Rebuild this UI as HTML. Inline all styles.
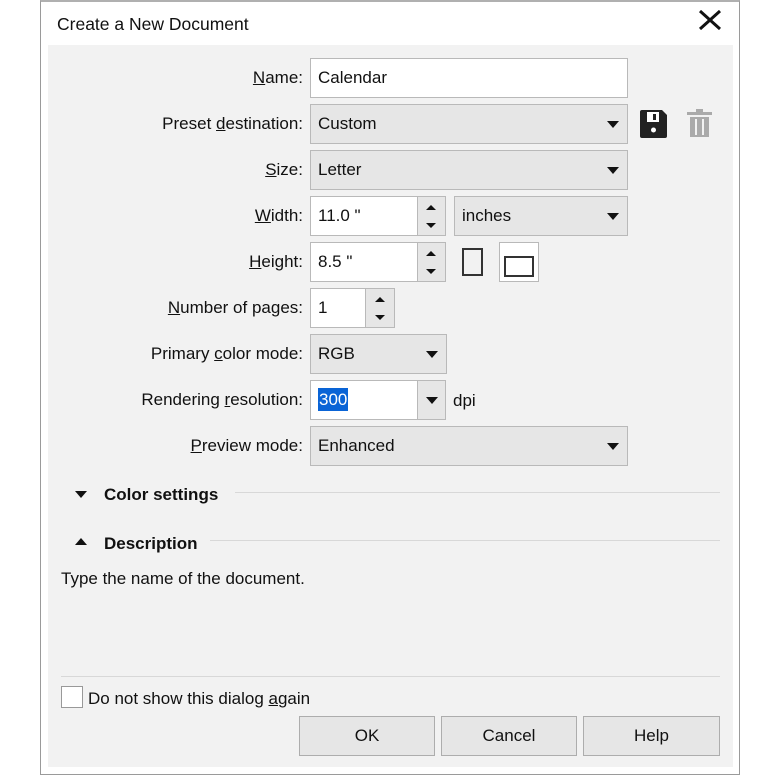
<!DOCTYPE html><html><head><style>
body{margin:0;width:780px;height:775px;background:#fff;position:relative;font-family:"Liberation Sans",sans-serif;font-size:17px;color:#111;overflow:hidden}
div{position:absolute;box-sizing:border-box}
.lab{right:477px;height:39px;line-height:40px;text-align:right;white-space:nowrap}
.in{background:#fff;border:1px solid #b9b9b9;padding-left:7px;line-height:38px}
.sel{background:#e6e6e6;border:1px solid #b9b9b9;padding-left:7px;line-height:38px}
.arr{width:0;height:0;border-left:6px solid transparent;border-right:6px solid transparent;border-top:7px solid #111}
.sp{background:#e6e6e6;border:1px solid #b9b9b9}
.up{width:0;height:0;border-left:5px solid transparent;border-right:5px solid transparent;border-bottom:5px solid #111}
.dn{width:0;height:0;border-left:5px solid transparent;border-right:5px solid transparent;border-top:5px solid #111}
.btn{background:#e6e6e6;border:1px solid #adadad;text-align:center;line-height:38px;top:716px;height:40px}
u{text-decoration:underline}
</style></head><body>
<div style="left:40px;top:0;width:700px;height:775px;border:1px solid #9a9a9a;border-top:2px solid #b0b0b0;background:#fff"></div>
<div style="left:48px;top:45px;width:685px;height:722px;background:#f2f2f2"></div>
<div style="left:57px;top:14px;font-size:17.5px">Create a New Document</div>
<svg style="position:absolute;left:698px;top:10px" width="24" height="20"><path d="M2 1L22 19M22 1L2 19" stroke="#111" stroke-width="3"/></svg>

<div class="lab" style="top:58px"><u>N</u>ame:</div>
<div class="in" style="left:310px;top:58px;width:318px;height:40px">Calendar</div>

<div class="lab" style="top:104px">Preset <u>d</u>estination:</div>
<div class="sel" style="left:310px;top:104px;width:318px;height:40px">Custom</div>
<div class="arr" style="left:607px;top:121px"></div>
<svg style="position:absolute;left:639px;top:110px" width="29" height="29"><path d="M3 0H23L28 5V26Q28 28 26 28H3Q1 28 1 26V2Q1 0 3 0Z" fill="#222"/><rect x="8" y="2" width="12" height="10" fill="#fff"/><rect x="14" y="4" width="3" height="6" fill="#222"/><circle cx="14.5" cy="20" r="2.5" fill="#fff"/></svg>
<svg style="position:absolute;left:686px;top:109px" width="27" height="29"><rect x="1" y="3" width="25" height="3" fill="#aaa"/><rect x="10" y="0" width="7" height="3" fill="#aaa"/><rect x="4" y="8" width="19" height="20" fill="#aaa"/><rect x="9" y="10" width="2" height="16" fill="#f2f2f2"/><rect x="16" y="10" width="2" height="16" fill="#f2f2f2"/></svg>

<div class="lab" style="top:150px"><u>S</u>ize:</div>
<div class="sel" style="left:310px;top:150px;width:318px;height:40px">Letter</div>
<div class="arr" style="left:607px;top:167px"></div>

<div class="lab" style="top:196px"><u>W</u>idth:</div>
<div class="in" style="left:310px;top:196px;width:108px;height:40px">11.0 "</div>
<div class="sp" style="left:417px;top:196px;width:29px;height:40px"></div>
<div class="up" style="left:426px;top:205px"></div><div class="dn" style="left:426px;top:223px"></div>
<div class="sel" style="left:454px;top:196px;width:174px;height:40px">inches</div>
<div class="arr" style="left:607px;top:213px"></div>

<div class="lab" style="top:242px"><u>H</u>eight:</div>
<div class="in" style="left:310px;top:242px;width:108px;height:40px">8.5 "</div>
<div class="sp" style="left:417px;top:242px;width:29px;height:40px"></div>
<div class="up" style="left:426px;top:251px"></div><div class="dn" style="left:426px;top:269px"></div>
<div style="left:462px;top:248px;width:21px;height:28px;border:2px solid #333"></div>
<div style="left:499px;top:242px;width:40px;height:40px;border:1px solid #b9b9b9;background:#fff"></div>
<div style="left:504px;top:256px;width:30px;height:21px;border:2px solid #333"></div>

<div class="lab" style="top:288px"><u>N</u>umber of pages:</div>
<div class="in" style="left:310px;top:288px;width:56px;height:40px">1</div>
<div class="sp" style="left:365px;top:288px;width:30px;height:40px"></div>
<div class="up" style="left:375px;top:297px"></div><div class="dn" style="left:375px;top:315px"></div>

<div class="lab" style="top:334px">Primary <u>c</u>olor mode:</div>
<div class="sel" style="left:310px;top:334px;width:137px;height:40px">RGB</div>
<div class="arr" style="left:426px;top:351px"></div>

<div class="lab" style="top:380px">Rendering <u>r</u>esolution:</div>
<div class="in" style="left:310px;top:380px;width:108px;height:40px"><span style="background:#0a64d6;color:#fff;padding:2px 1px">300</span></div>
<div class="sp" style="left:417px;top:380px;width:29px;height:40px"></div>
<div class="arr" style="left:426px;top:397px"></div>
<div style="left:453px;top:381px;line-height:39px">dpi</div>

<div class="lab" style="top:426px"><u>P</u>review mode:</div>
<div class="sel" style="left:310px;top:426px;width:318px;height:40px">Enhanced</div>
<div class="arr" style="left:607px;top:443px"></div>

<div class="arr" style="left:75px;top:491px"></div>
<div style="left:104px;top:485px;font-weight:bold">Color settings</div>
<div style="left:235px;top:492px;width:485px;height:1px;background:#d8d8d8"></div>
<div style="left:75px;top:538px;width:0;height:0;border-left:6px solid transparent;border-right:6px solid transparent;border-bottom:7px solid #111"></div>
<div style="left:104px;top:534px;font-weight:bold">Description</div>
<div style="left:210px;top:540px;width:510px;height:1px;background:#d8d8d8"></div>
<div style="left:61px;top:569px">Type the name of the document.</div>
<div style="left:61px;top:676px;width:659px;height:1px;background:#d8d8d8"></div>

<div style="left:61px;top:686px;width:22px;height:22px;border:1px solid #999;background:#fff"></div>
<div style="left:88px;top:689px">Do not show this dialog <u>a</u>gain</div>
<div class="btn" style="left:299px;width:136px">OK</div>
<div class="btn" style="left:441px;width:136px">Cancel</div>
<div class="btn" style="left:583px;width:137px">Help</div>
</body></html>
